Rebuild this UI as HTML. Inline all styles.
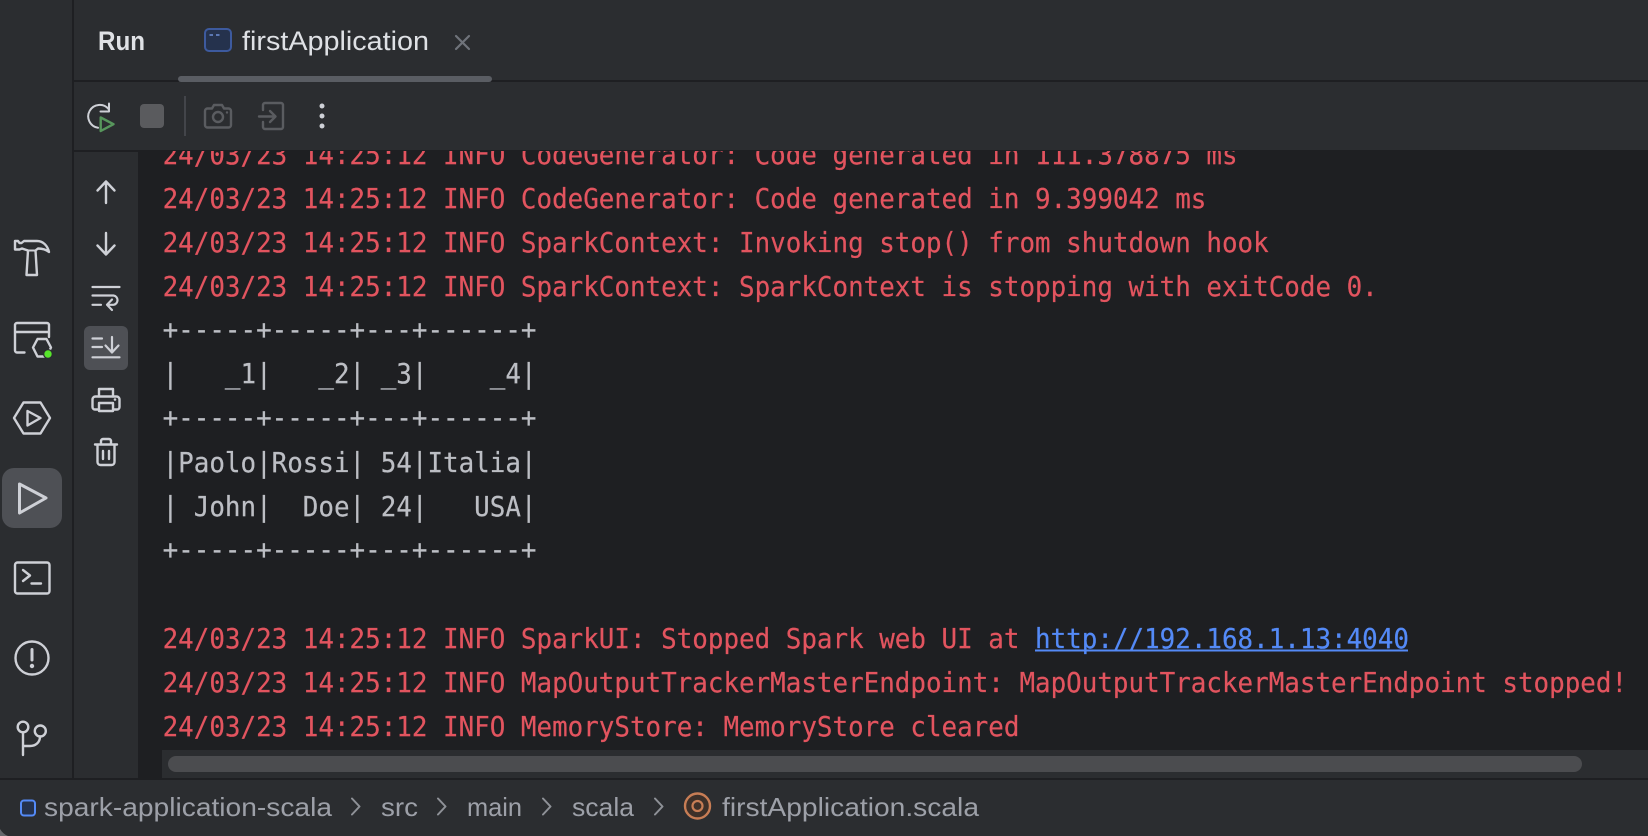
<!DOCTYPE html>
<html><head><meta charset="utf-8"><style>
html,body{margin:0;padding:0;background:#2b2d30;width:1648px;height:836px;overflow:hidden}
svg{display:block}
.c{font-family:"DejaVu Sans Mono","Liberation Mono",monospace;font-size:25.89px}
.r{fill:#e2545f;stroke:#e2545f;stroke-width:.2px}.g{fill:#bcbec4;stroke:#bcbec4;stroke-width:.2px}
.u{font-family:"Liberation Sans",sans-serif}
.i{fill:none;stroke:#ced0d6;stroke-width:2.4px;stroke-linecap:round;stroke-linejoin:round}
.d{fill:none;stroke:#5a5c60;stroke-width:2.4px;stroke-linecap:round;stroke-linejoin:round}
.s{fill:none;stroke:#8e9197;stroke-width:2px;stroke-linecap:round;stroke-linejoin:round}
</style></head><body>
<svg width="1648" height="836" viewBox="0 0 1648 836" xmlns="http://www.w3.org/2000/svg">
<rect width="1648" height="836" fill="#2b2d30"/>
<!-- dividers -->
<rect x="72" y="0" width="2" height="780" fill="#1e1f22"/>
<rect x="74" y="80" width="1574" height="2" fill="#1e1f22"/>
<rect x="178" y="76" width="314" height="6" rx="3" fill="#5a5d63"/>
<!-- console -->
<rect x="74" y="150" width="1574" height="2" fill="#1e1f22"/>
<rect x="138" y="151" width="1510" height="627" fill="#1e1f22"/>
<defs><clipPath id="cc"><rect x="138" y="151" width="1510" height="599"/></clipPath></defs>
<g clip-path="url(#cc)" class="c">
<text transform="translate(162.6 164) scale(1 1.05)" class="r">24/03/23 14:25:12 INFO CodeGenerator: Code generated in 111.378875 ms</text>
<text transform="translate(162.6 208) scale(1 1.05)" class="r">24/03/23 14:25:12 INFO CodeGenerator: Code generated in 9.399042 ms</text>
<text transform="translate(162.6 252) scale(1 1.05)" class="r">24/03/23 14:25:12 INFO SparkContext: Invoking stop() from shutdown hook</text>
<text transform="translate(162.6 296) scale(1 1.05)" class="r">24/03/23 14:25:12 INFO SparkContext: SparkContext is stopping with exitCode 0.</text>
<text transform="translate(162.6 339) scale(1 1.05)" class="g">+-----+-----+---+------+</text>
<text transform="translate(162.6 383) scale(1 1.05)" class="g">|&#160;&#160;&#160;_1|&#160;&#160;&#160;_2|&#160;_3|&#160;&#160;&#160;&#160;_4|</text>
<text transform="translate(162.6 427) scale(1 1.05)" class="g">+-----+-----+---+------+</text>
<text transform="translate(162.6 472) scale(1 1.05)" class="g">|Paolo|Rossi|&#160;54|Italia|</text>
<text transform="translate(162.6 516) scale(1 1.05)" class="g">|&#160;John|&#160;&#160;Doe|&#160;24|&#160;&#160;&#160;USA|</text>
<text transform="translate(162.6 559) scale(1 1.05)" class="g">+-----+-----+---+------+</text>
<text transform="translate(162.6 648) scale(1 1.05)" class="r">24/03/23 14:25:12 INFO SparkUI: Stopped Spark web UI at <tspan style="fill:#548af7;stroke:#548af7">http://192.168.1.13:4040</tspan></text>
<text transform="translate(162.6 692) scale(1 1.05)" class="r">24/03/23 14:25:12 INFO MapOutputTrackerMasterEndpoint: MapOutputTrackerMasterEndpoint stopped!</text>
<text transform="translate(162.6 736) scale(1 1.05)" class="r">24/03/23 14:25:12 INFO MemoryStore: MemoryStore cleared</text>
</g>
<rect x="1035" y="649.5" width="373" height="2" fill="#548af7"/>
<!-- scrollbar -->
<rect x="162" y="750" width="1486" height="28" fill="#2b2d30"/>
<rect x="168" y="756" width="1414" height="16" rx="8" fill="#4b4c4f"/>
<!-- status bar -->
<rect x="0" y="778" width="1648" height="2" fill="#1e1f22"/>
<rect x="0" y="780" width="1648" height="56" fill="#2b2d30"/>
<path d="M0 829 Q3 834 8 836 L0 836Z" fill="#66686c"/>
<!-- header text -->
<text x="98" y="50" class="u" font-size="27" font-weight="700" fill="#dfe1e5" textLength="47" lengthAdjust="spacingAndGlyphs">Run</text>
<rect x="205" y="29" width="26" height="22" rx="4" fill="#25324d" stroke="#3d5a9e" stroke-width="2"/>
<path d="M209.500 35H213M216 35H219.500" stroke="#6e8fd6" stroke-width="1.600" fill="none"/>
<text x="242" y="50" class="u" font-size="27" fill="#dfe1e5" textLength="187" lengthAdjust="spacingAndGlyphs">firstApplication</text>
<path d="M456 36L469 49M469 36L456 49" stroke="#6f737a" stroke-width="2.200" fill="none" stroke-linecap="round"/>
<!-- toolbar -->
<path class="i" style="stroke-width:2px" d="M98 127.800A11.500 11.500 0 1 1 108.500 109"/>
<path class="i" style="stroke-width:2px" d="M109 103.500V111.500H100.500"/>
<path d="M100.700 117.500L113.500 124.200L100.700 131Z" fill="none" stroke="#57965c" stroke-width="2.400" stroke-linejoin="round"/>
<rect x="140" y="104" width="24" height="24" rx="4" fill="#5a5b5e"/>
<rect x="184" y="96" width="2" height="40" fill="#43454a"/>
<path class="d" d="M207.500 108.500H212L214 105H222L224 108.500H228.500A2.500 2.500 0 0 1 231 111V125A2.500 2.500 0 0 1 228.500 127.500H207.500A2.500 2.500 0 0 1 205 125V111A2.500 2.500 0 0 1 207.500 108.500Z"/>
<circle class="d" cx="218" cy="117" r="5"/>
<circle cx="227" cy="112.500" r="1.200" fill="#5a5c60"/>
<path class="d" d="M263 110V105A2 2 0 0 1 265 103H281A2 2 0 0 1 283 105V127A2 2 0 0 1 281 129H265A2 2 0 0 1 263 127V122"/>
<path class="d" d="M259 116.500H275M270 111L275.500 116.500L270 122"/>
<circle cx="322" cy="106" r="2.500" fill="#ced0d6"/><circle cx="322" cy="116" r="2.500" fill="#ced0d6"/><circle cx="322" cy="126" r="2.500" fill="#ced0d6"/>
<!-- left strip -->
<path class="i" d="M15 241V249.500H19.500L22 248.500L28 250.500L26.500 275H37L35.500 250.500L38 248.500C42 248.500 46 249.500 49 252C47.500 245.500 43 241 37 241H24L21.500 243H19.500L18 241Z"/>
<path class="i" style="stroke-width:2px" d="M28 250.500H35.500"/>
<path class="i" d="M24.500 352.500H17A2 2 0 0 1 15 350.500V325A2 2 0 0 1 17 323H47A2 2 0 0 1 49 325V337M15 332H49"/>
<path class="i" d="M33 347.500L37.500 339H46.500L51 347.500L46.500 356.500H37.500Z"/>
<circle cx="48" cy="354" r="5" fill="#2b2d30"/><circle cx="48" cy="354" r="3.700" fill="#57e52b"/>
<path class="i" d="M14 418L23.500 402.500H40.500L50 418L40.500 433.500H23.500Z"/>
<path class="i" d="M27.500 411L40.500 418L27.500 425.500Z"/>
<rect x="2" y="468" width="60" height="60" rx="12" fill="#4e5055"/>
<path class="i" style="stroke-width:3px" d="M19.500 484L46 498L19.500 513Z"/>
<rect class="i" x="15" y="562.500" width="34.500" height="31" rx="2.500"/>
<path class="i" d="M23 570L30 575.500L23 581M31.500 583.500H41"/>
<circle class="i" cx="32" cy="658" r="16.500"/>
<path class="i" style="stroke-width:3px" d="M32 649.500V660"/>
<circle cx="32" cy="666" r="2.200" fill="#ced0d6"/>
<circle class="i" cx="23" cy="727" r="5.300"/>
<circle class="i" cx="40.300" cy="731" r="5.500"/>
<path class="i" d="M23 732.500V755M40 736.500C40 743 35 746 30 746H23"/>
<!-- side bar -->
<path class="i" d="M106 181.500V203M97.500 190.500L106 181.500L114.500 190.500"/>
<path class="i" d="M106 233V254.500M97.500 245.500L106 254.500L114.500 245.500"/>
<path class="i" style="stroke-width:2.200px" d="M92.500 287H119.500M92.500 295.500H113.500A4.700 4.700 0 0 1 113.500 304.800H107.500M92.500 304.800H101M112 299.500L107 304.800L112 310"/>
<rect x="84" y="326" width="44" height="44" rx="6" fill="#4e5055"/>
<path class="i" style="stroke-width:2.200px" d="M92.500 338.500H102M92.500 347H102M92.500 357.300H119.500M112 337V352.500M105.500 345.500L112 352.500L118.500 345.500"/>
<path class="i" d="M99 396.500V389H113V396.500"/>
<path class="i" d="M98.500 409.500H95A2.500 2.500 0 0 1 92.500 407V399.500A3 3 0 0 1 95.500 396.500H116.500A3 3 0 0 1 119.500 399.500V407A2.500 2.500 0 0 1 117 409.500H113.500"/>
<rect class="i" x="99" y="403" width="14" height="8"/>
<circle cx="115" cy="399.500" r="1.300" fill="#ced0d6"/>
<path class="i" d="M95 444.500H117M101 444.500V441A2 2 0 0 1 103 439H109A2 2 0 0 1 111 441V444.500M97.500 444.500V462A3 3 0 0 0 100.500 465H111.500A3 3 0 0 0 114.500 462V444.500M103 451V459M109 451V459"/>
<!-- status -->
<rect x="21" y="800.500" width="14" height="15" rx="3" fill="#25324d" stroke="#548af7" stroke-width="2"/>
<g class="u" font-size="26" fill="#9da0a8">
<text x="44" y="816" textLength="288" lengthAdjust="spacingAndGlyphs">spark-application-scala</text>
<text x="381" y="816" textLength="37" lengthAdjust="spacingAndGlyphs">src</text>
<text x="467" y="816" textLength="55" lengthAdjust="spacingAndGlyphs">main</text>
<text x="572" y="816" textLength="62" lengthAdjust="spacingAndGlyphs">scala</text>
<text x="722" y="816" textLength="257" lengthAdjust="spacingAndGlyphs">firstApplication.scala</text>
</g>
<path class="s" d="M352 798.500L359.500 806.500L352 814.500M438 798.500L445.500 806.500L438 814.500M543 798.500L550.500 806.500L543 814.500M655 798.500L662.500 806.500L655 814.500"/>
<circle cx="697.500" cy="806" r="12.500" fill="#3d3029" stroke="#c77d55" stroke-width="2.400"/>
<circle cx="697.500" cy="806" r="5" fill="none" stroke="#c77d55" stroke-width="2.200"/>
</svg>
</body></html>
